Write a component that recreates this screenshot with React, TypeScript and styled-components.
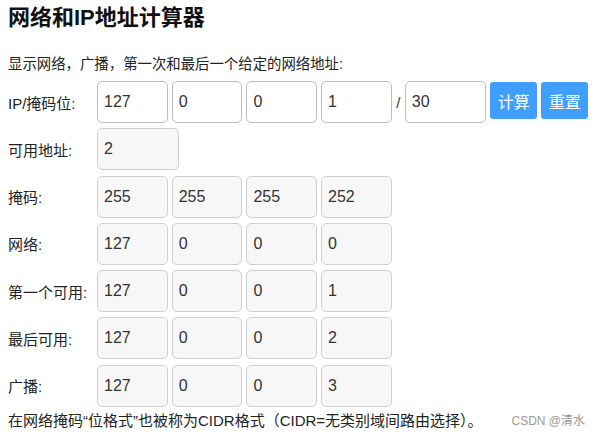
import styled, { createGlobalStyle } from "styled-components";

const GlobalStyle = createGlobalStyle`
  html, body {
    margin: 0;
    padding: 0;
    background: #fff;
  }
  body {
    font-family: "Liberation Sans", "Noto Sans CJK SC", sans-serif;
    color: #333;
  }
`;

type Row = { label: string; values: string[]; wide?: boolean };

const results: Row[] = [
  { label: "可用地址:", values: ["2"], wide: true },
  { label: "掩码:", values: ["255", "255", "255", "252"] },
  { label: "网络:", values: ["127", "0", "0", "0"] },
  { label: "第一个可用:", values: ["127", "0", "0", "1"] },
  { label: "最后可用:", values: ["127", "0", "0", "2"] },
  { label: "广播:", values: ["127", "0", "0", "3"] },
];

export default function App() {
  return (
    <Page>
      <GlobalStyle />
      <Title>网络和IP地址计算器</Title>
      <Intro>显示网络，广播，第一次和最后一个给定的网络地址:</Intro>
      <Form>
        <FormRow>
          <Label>IP/掩码位:</Label>
          <Field defaultValue="127" />
          <Field defaultValue="0" />
          <Field defaultValue="0" />
          <Field defaultValue="1" />
          <Slash>/</Slash>
          <Field $wide defaultValue="30" />
          <Button>计算</Button>
          <Button>重置</Button>
        </FormRow>
        {results.map((row) => (
          <FormRow key={row.label}>
            <Label>{row.label}</Label>
            {row.values.map((v, i) => (
              <Field key={i} $readOnly $wide={row.wide} readOnly value={v} />
            ))}
          </FormRow>
        ))}
      </Form>
      <Footer>
        <Note>在网络掩码“位格式”也被称为CIDR格式（CIDR=无类别域间路由选择）。</Note>
        <Watermark>CSDN @清水</Watermark>
      </Footer>
    </Page>
  );
}

const Page = styled.div`
  padding: 4px 8px 0;
  width: 599px;
  height: 434px;
  box-sizing: border-box;
  overflow: hidden;
`;

const Title = styled.h2`
  margin: 0;
  font-size: 22px;
  line-height: 28px;
  font-weight: bold;
  color: #111;
`;

const Intro = styled.p`
  margin: 22px 0 0;
  font-size: 14.4px;
  line-height: 20px;
  color: #222;
`;

const Form = styled.div`
  margin-top: 7px;
  display: flex;
  flex-direction: column;
  gap: 5.3px;
`;

const FormRow = styled.div`
  display: flex;
  align-items: center;
  gap: 4px;
  height: 42px;
`;

const Label = styled.span`
  width: 85px;
  font-size: 15px;
  color: #222;
`;

const Field = styled.input<{ $readOnly?: boolean; $wide?: boolean }>`
  box-sizing: border-box;
  width: ${(p) => (p.$wide ? "81.5px" : "70.7px")};
  height: 42px;
  padding: 0 6px;
  border: 1px solid ${(p) => (p.$readOnly ? "#cfcfcf" : "#bdbdbd")};
  border-radius: 5px;
  background: ${(p) => (p.$readOnly ? "#f7f7f7" : "#fff")};
  font-family: "Liberation Sans", sans-serif;
  font-size: 16px;
  color: #333;
  outline: none;
`;

const Slash = styled.span`
  width: 5px;
  text-align: center;
  font-size: 15px;
  color: #333;
`;

const Button = styled.button`
  align-self: flex-start;
  margin-top: 1px;
  width: 47px;
  height: 37px;
  padding: 0;
  border: none;
  border-radius: 3px;
  background: #409eff;
  color: #fff;
  font-family: "Noto Sans CJK SC", sans-serif;
  font-size: 16px;
  cursor: pointer;
`;

const Footer = styled.div`
  margin-top: 4px;
  display: flex;
  align-items: center;
  line-height: 20px;
`;

const Note = styled.span`
  font-size: 15px;
  color: #222;
`;

const Watermark = styled.span`
  margin-left: auto;
  margin-right: 6px;
  font-size: 12px;
  color: #9a9a9a;
`;
